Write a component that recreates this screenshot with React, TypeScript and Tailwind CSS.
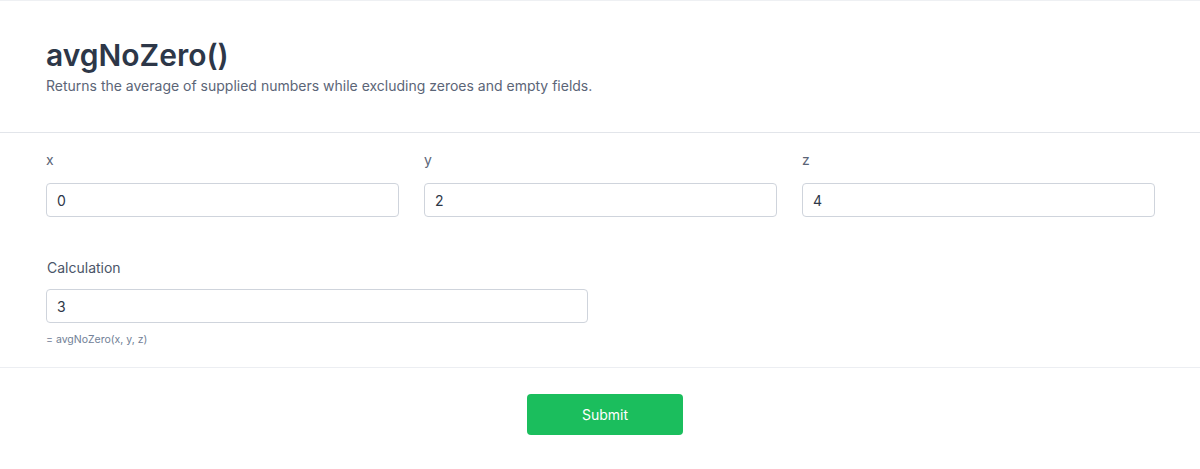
export default function App() {
  const fields = [
    { name: 'x', value: '0' },
    { name: 'y', value: '2' },
    { name: 'z', value: '4' },
  ];

  return (
    <div className="min-h-[469px] bg-white border-t border-[#eef0f3] font-['Inter',sans-serif] text-[#2d3748]">
      {/* Header */}
      <div className="px-[46px] pt-[36px] pb-[36px] border-b border-[#e2e5ea]">
        <h1 className="text-[30px] font-semibold text-[#2d3748] leading-9 mb-[3px]">avgNoZero()</h1>
        <p className="text-sm leading-5 text-[#5b6577]">
          Returns the average of supplied numbers while excluding zeroes and empty fields.
        </p>
      </div>

      {/* Inputs */}
      <div className="pl-[46px] pr-[45px] pt-[17px] pb-[20px] border-b border-[#eceef2]">
        <div className="grid grid-cols-3 gap-[25px]">
          {fields.map((f) => (
            <div key={f.name}>
              <label className="block text-sm leading-5 text-[#5b6577]">{f.name}</label>
              <input
                readOnly
                value={f.value}
                className="mt-[13px] block w-full h-[34px] px-[10px] text-sm text-[#2d3748] border border-[#cfd4dc] rounded-[4px] outline-none"
              />
            </div>
          ))}
        </div>

        <div className="mt-[41px] w-[542px]">
          <label className="block pl-px text-sm leading-5 text-[#4a5568]">Calculation</label>
          <input
            readOnly
            value="3"
            className="mt-[11px] block w-full h-[34px] px-[10px] text-sm text-[#2d3748] border border-[#cfd4dc] rounded-[4px] outline-none"
          />
          <div className="mt-[10px] text-[10.5px] leading-[14px] text-[#718096]">= avgNoZero(x, y, z)</div>
        </div>
      </div>

      {/* Footer */}
      <div className="flex justify-center pl-[10px] pt-[26px] pb-[35px]">
        <button className="w-[156px] h-[41px] rounded-[4px] bg-[#1bbe5d] text-sm text-white">Submit</button>
      </div>
    </div>
  );
}
